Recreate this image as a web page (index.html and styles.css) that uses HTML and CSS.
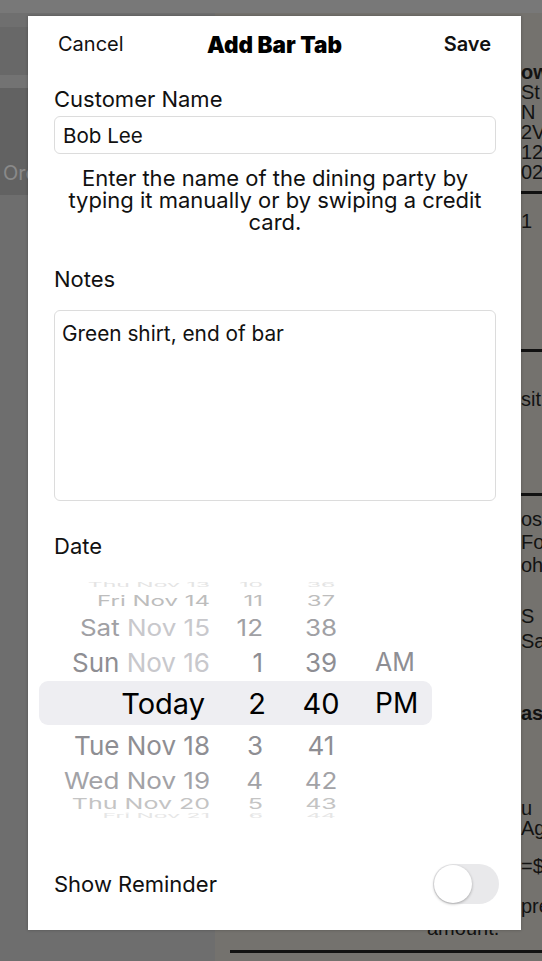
FILE: index.html
```html
<!DOCTYPE html>
<html lang="en">

<head>
  <meta charset="UTF-8">
  <meta name="viewport" content="width=device-width, initial-scale=1.0">
  <title>Add Bar Tab</title>
  <link rel="stylesheet" href="styles.css">
</head>

<body>

  <div class="topbar"></div>

  <div class="backdrop">
    <aside class="sidebar">
      <div class="band band-a"></div>
      <div class="band band-b"></div>
      <div class="band band-c"></div>
      <div class="band band-d"><span class="tab-label">Orders</span></div>
      <div class="band band-e"></div>
    </aside>

    <section class="receipt">
      <div class="receipt-block address">
        <div class="bold">ow</div>
        <div>St</div>
        <div>N</div>
        <div>2V</div>
        <div>12</div>
        <div>02</div>
      </div>
      <div class="rule rule-1"></div>
      <div class="receipt-line line-m">1</div>
      <div class="rule rule-2"></div>
      <div class="receipt-line line-si">sit</div>
      <div class="rule rule-3"></div>
      <div class="receipt-block items">
        <div>os</div>
        <div>Fo</div>
        <div>oh</div>
      </div>
      <div class="receipt-block subtotal">
        <div>S</div>
        <div>Sa</div>
      </div>
      <div class="receipt-line line-as bold">as</div>
      <div class="receipt-block tip">
        <div>u</div>
        <div>Ag</div>
      </div>
      <div class="receipt-line line-eq">=$</div>
      <div class="receipt-block note">
        <div>pre</div>
        <div class="note-end">amount.</div>
      </div>
      <div class="rule rule-4"></div>
    </section>
  </div>

  <div class="sheet">
    <div class="sheet-header">
      <span class="header-btn cancel">Cancel</span>
      <span class="sheet-title">Add Bar Tab</span>
      <span class="header-btn save">Save</span>
    </div>

    <div class="sheet-body">
      <div class="field-label customer-label">Customer Name</div>
      <input class="text-input" type="text" value="Bob Lee">
      <p class="hint">Enter the name of the dining party by typing it manually or by swiping a credit card.</p>

      <div class="field-label notes-label">Notes</div>
      <textarea class="notes-input">Green shirt, end of bar</textarea>

      <div class="field-label date-label">Date</div>
      <div class="picker">
        <div class="row r-4"><span class="c-date">Thu Nov 13</span><span class="c-hour">10</span><span class="c-min">36</span><span class="c-ampm"></span></div>
        <div class="row r-3"><span class="c-date">Fri Nov 14</span><span class="c-hour">11</span><span class="c-min">37</span><span class="c-ampm"></span></div>
        <div class="row r-2"><span class="c-date"><span class="dk">Sat</span> Nov 15</span><span class="c-hour">12</span><span class="c-min">38</span><span class="c-ampm"></span></div>
        <div class="row r-1"><span class="c-date"><span class="dk">Sun</span> Nov 16</span><span class="c-hour">1</span><span class="c-min">39</span><span class="c-ampm">AM</span></div>
        <div class="row r0 selected"><span class="c-date">Today</span><span class="c-hour">2</span><span class="c-min">40</span><span class="c-ampm">PM</span></div>
        <div class="row r1"><span class="c-date">Tue Nov 18</span><span class="c-hour">3</span><span class="c-min">41</span><span class="c-ampm"></span></div>
        <div class="row r2"><span class="c-date">Wed Nov 19</span><span class="c-hour">4</span><span class="c-min">42</span><span class="c-ampm"></span></div>
        <div class="row r3"><span class="c-date">Thu Nov 20</span><span class="c-hour">5</span><span class="c-min">43</span><span class="c-ampm"></span></div>
        <div class="row r4"><span class="c-date">Fri Nov 21</span><span class="c-hour">6</span><span class="c-min">44</span><span class="c-ampm"></span></div>
      </div>

      <div class="reminder">
        <span class="field-label">Show Reminder</span>
        <div class="toggle"><div class="knob"></div></div>
      </div>
    </div>
  </div>

</body>

</html>
```

FILE: styles.css
```css
* {
  box-sizing: border-box;
}

body {
  margin: 0;
  padding: 0;
  width: 542px;
  height: 961px;
  overflow: hidden;
  position: relative;
  background-color: #6e6e6e;
  font-family: "Inter", "Noto Sans", sans-serif;
}

/* dimmed screen behind the sheet */

.topbar {
  height: 13px;
  background-color: #787878;
}

.backdrop {
  display: flex;
  height: 948px;
}

.sidebar {
  width: 215px;
  flex-shrink: 0;
  display: flex;
  flex-direction: column;
}

.band-a {
  height: 14px;
  background-color: #6f6f6f;
}

.band-b {
  height: 48px;
  background-color: #686868;
}

.band-c {
  height: 13px;
  background-color: #737373;
}

.band-d {
  height: 107px;
  background-color: #626262;
  display: flex;
  align-items: flex-end;
  padding: 0 0 10px 3px;
}

.band-d .tab-label {
  font-size: 20px;
  line-height: 24px;
  color: #8a8a8a;
}

.band-e {
  flex: 1;
  background-color: #6e6e6e;
}

.receipt {
  flex: 1;
  min-width: 0;
  overflow: hidden;
  background-color: #74726e;
  padding-top: 49px;
  font-family: "Liberation Sans", Arial, sans-serif;
  font-size: 20px;
  color: #121212;
}

.receipt .bold {
  font-weight: bold;
}

.receipt-block,
.receipt-line {
  padding-left: 306px;
  white-space: nowrap;
}

.address {
  line-height: 20px;
}

.rule {
  height: 3px;
  background-color: #111;
}

.rule-1 {
  margin-top: 9px;
}

.line-m {
  margin-top: 17px;
  line-height: 20px;
}

.rule-2 {
  margin-top: 118px;
}

.line-si {
  margin-top: 37px;
  line-height: 20px;
}

.rule-3 {
  margin-top: 84px;
}

.items {
  margin-top: 12px;
  line-height: 23px;
}

.subtotal {
  margin-top: 27px;
  line-height: 25px;
}

.line-as {
  margin-top: 49px;
  line-height: 20px;
}

.tip {
  margin-top: 75px;
  line-height: 20px;
}

.line-eq {
  margin-top: 18px;
  line-height: 20px;
}

.note {
  margin-top: 19px;
  line-height: 22px;
}

.note .note-end {
  margin-left: -94px;
}

.rule-4 {
  margin-top: 11px;
  margin-left: 15px;
}

/* sheet */

.sheet {
  position: absolute;
  top: 16px;
  left: 28px;
  width: 493px;
  height: 914px;
  background-color: #fff;
  box-shadow: 0 0 3px rgba(0, 0, 0, 0.25);
  color: #111;
}

.sheet-header {
  height: 56px;
  padding: 0 30px;
  display: grid;
  grid-template-columns: 1fr auto 1fr;
  align-items: center;
  font-size: 20px;
}

.sheet-title {
  font-size: 22.5px;
  font-weight: 900;
  color: #000;
}

.header-btn.save {
  justify-self: end;
  font-weight: 600;
}

.sheet-body {
  padding: 0 25px 0 26px;
  display: flex;
  flex-direction: column;
}

.field-label {
  font-size: 22px;
  line-height: 26px;
}

.customer-label {
  margin-top: 14px;
}

.text-input {
  margin-top: 4px;
  height: 38px;
  width: 100%;
  border: 1px solid #dcdcdc;
  border-radius: 6px;
  padding: 0 8px;
  font-family: inherit;
  font-size: 20.6px;
  color: #111;
  outline: none;
}

.hint {
  margin: 13px 0 0;
  text-align: center;
  font-size: 22px;
  line-height: 22px;
}

.notes-label {
  margin-top: 33px;
}

.notes-input {
  margin-top: 18px;
  height: 191px;
  width: 100%;
  border: 1px solid #dcdcdc;
  border-radius: 6px;
  padding: 10px 7px;
  font-family: inherit;
  font-size: 20.8px;
  line-height: 26px;
  color: #111;
  resize: none;
  outline: none;
}

.date-label {
  margin-top: 32px;
}

/* date wheel */

.picker {
  margin-top: 19px;
  margin-left: -15px;
  width: 393px;
  display: flex;
  flex-direction: column;
}

.picker .row {
  display: flex;
  align-items: center;
  font-size: 26px;
  color: #8e8e93;
  white-space: nowrap;
}

.picker .c-date {
  width: 171px;
  text-align: right;
}

.picker .c-hour {
  width: 53px;
  text-align: right;
}

.picker .c-min {
  width: 58px;
  margin-left: 29px;
  text-align: center;
}

.picker .c-ampm {
  margin-left: 25px;
}

.picker .r-4 {
  height: 14px;
  font-size: 23px;
  color: #e4e4e4;
  transform: scaleY(0.25);
}

.picker .r-3 {
  height: 18px;
  font-size: 24px;
  color: #bdbdbd;
  transform: scaleY(0.6);
}

.picker .r-2 {
  height: 34px;
  color: #c8c8cc;
  transform: scaleY(0.86);
}

.picker .r-1 {
  height: 36px;
  color: #c8c8cc;
}

.picker .r-1 .c-hour,
.picker .r-1 .c-min,
.picker .r-1 .c-ampm,
.picker .r-1 .dk {
  color: #8e8e93;
}

.picker .r-2 .c-hour,
.picker .r-2 .c-min,
.picker .r-2 .dk {
  color: #a0a0a4;
}

.picker .r-1 .c-ampm {
  font-size: 25px;
}

.picker .r0 {
  height: 44px;
  margin-top: 1px;
  font-size: 29px;
  color: #000;
  background-color: #eeeef2;
  border-radius: 9px;
}

.picker .r0 .c-date {
  padding-right: 5px;
}

.picker .r0 .c-hour {
  width: 56px;
}

.picker .r0 .c-min {
  margin-left: 26px;
}

.picker .r0 .c-ampm {
  font-size: 28px;
}

.picker .r1 {
  height: 40px;
  color: #8e8e93;
}

.picker .r2 {
  height: 30px;
  color: #a2a2a6;
  transform: scaleY(0.86);
}

.picker .r3 {
  height: 18px;
  font-size: 25px;
  color: #c4c4c4;
  transform: scaleY(0.6);
}

.picker .r4 {
  height: 6px;
  font-size: 23px;
  color: #e6e6e6;
  transform: scaleY(0.25);
}

/* reminder switch */

.reminder {
  margin-top: 45px;
  margin-right: -3px;
  height: 40px;
  display: flex;
  justify-content: space-between;
  align-items: center;
}

.toggle {
  width: 66px;
  height: 40px;
  border-radius: 20px;
  background-color: #e9e9eb;
  padding: 1px;
}

.toggle .knob {
  width: 38px;
  height: 38px;
  border-radius: 50%;
  background-color: #fff;
  box-shadow: 0 1px 3px rgba(0, 0, 0, 0.3);
}
```
